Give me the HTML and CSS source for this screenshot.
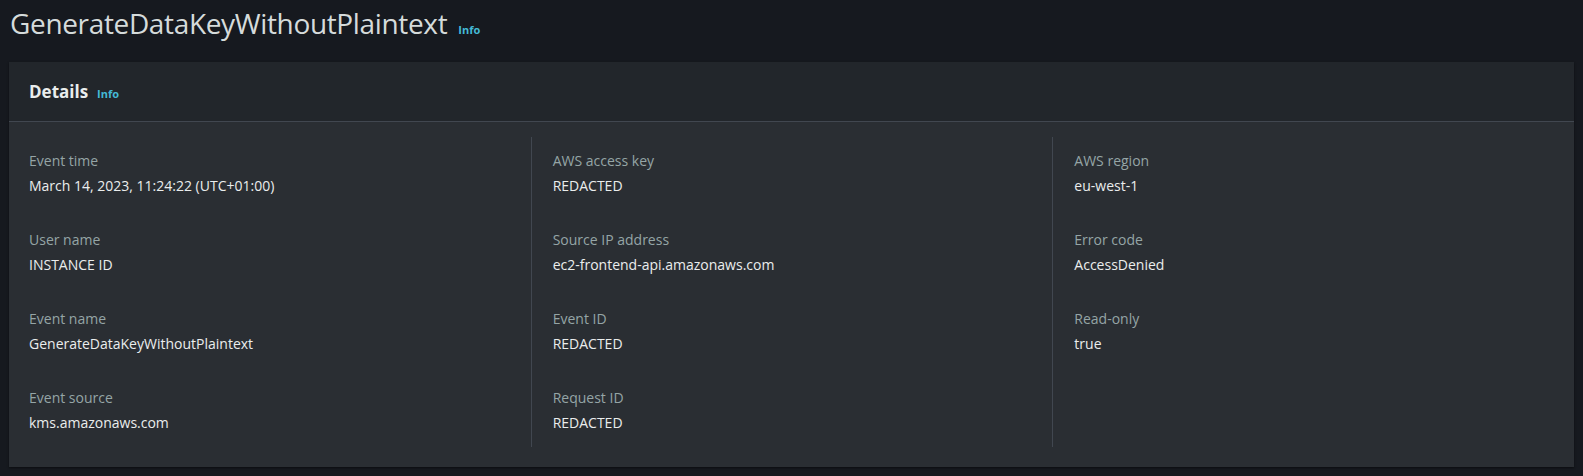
FILE: index.html
```html
<!DOCTYPE html>
<html lang="en">
<head>
<meta charset="utf-8">
<title>GenerateDataKeyWithoutPlaintext</title>
<link rel="stylesheet" href="styles.css">
</head>
<body>
<div class="page">
  <div class="page-header">
    <h1 class="page-title">GenerateDataKeyWithoutPlaintext</h1>
    <a class="info-link" href="#">Info</a>
  </div>
  <section class="card">
    <div class="card-header">
      <h2 class="card-title">Details</h2>
      <a class="info-link" href="#">Info</a>
    </div>
    <div class="card-body">
      <div class="column">
        <div class="pair"><div class="label">Event time</div><div class="value">March 14, 2023, 11:24:22 (UTC+01:00)</div></div>
        <div class="pair"><div class="label">User name</div><div class="value">INSTANCE ID</div></div>
        <div class="pair"><div class="label">Event name</div><div class="value">GenerateDataKeyWithoutPlaintext</div></div>
        <div class="pair"><div class="label">Event source</div><div class="value">kms.amazonaws.com</div></div>
      </div>
      <div class="column">
        <div class="pair"><div class="label">AWS access key</div><div class="value">REDACTED</div></div>
        <div class="pair"><div class="label">Source IP address</div><div class="value">ec2-frontend-api.amazonaws.com</div></div>
        <div class="pair"><div class="label">Event ID</div><div class="value">REDACTED</div></div>
        <div class="pair"><div class="label">Request ID</div><div class="value">REDACTED</div></div>
      </div>
      <div class="column">
        <div class="pair"><div class="label">AWS region</div><div class="value">eu-west-1</div></div>
        <div class="pair"><div class="label">Error code</div><div class="value">AccessDenied</div></div>
        <div class="pair"><div class="label">Read-only</div><div class="value">true</div></div>
      </div>
    </div>
  </section>
</div>
</body>
</html>
```

FILE: styles.css
```css
* { box-sizing: border-box; }
html, body { margin: 0; padding: 0; }
body {
  background: #16191f;
  font-family: "Open Sans", "Noto Sans", "Liberation Sans", sans-serif;
  color: #d5dbdb;
  width: 1583px;
  height: 476px;
  overflow: hidden;
}
.page { padding: 0 9px 0 9px; }
.page-header {
  display: flex;
  align-items: baseline;
  height: 62px;
  padding-top: 6px;
  padding-left: 1px;
}
.page-title {
  margin: 0;
  font-size: 28px;
  font-weight: 400;
  line-height: 35px;
  color: #d5dbdb;
  letter-spacing: -0.35px;
}
.info-link {
  margin-left: 11px;
  font-size: 11px;
  font-weight: 700;
  color: #44b9d6;
  text-decoration: none;
}
.card {
  width: 1565px;
  background: #2a2e33;
  box-shadow: 0 1px 2px rgba(0, 0, 0, 0.5);
}
.card-header {
  display: flex;
  align-items: baseline;
  background: #22262b;
  padding: 19px 20px 18px 20px;
  border-bottom: 1px solid #414750;
  height: 60px;
}
.card-title {
  margin: 0;
  font-size: 17px;
  font-weight: 700;
  line-height: 22px;
  color: #eaeded;
}
.card-header .info-link { margin-left: 9px; }
.card-body {
  display: grid;
  grid-template-columns: repeat(3, 1fr);
  padding: 15px 0 20px 0;
}
.column {
  display: flex;
  flex-direction: column;
  gap: 34px;
  padding: 14px 20px 14px 20px;
}
.column + .column {
  border-left: 1px solid #414750;
  padding-left: 21px;
}
.label {
  font-size: 14px;
  line-height: 20px;
  color: #95a5a6;
}
.value {
  margin-top: 5px;
  font-size: 14px;
  line-height: 20px;
  color: #eaeded;
}
```
